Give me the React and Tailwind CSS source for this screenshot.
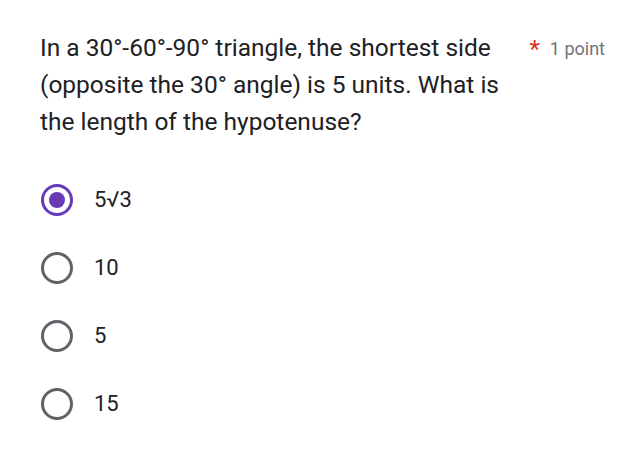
const options = [
  { label: '5√3', checked: true },
  { label: '10' },
  { label: '5' },
  { label: '15' },
];

function Radio({ checked }) {
  if (checked) {
    return (
      <div className="flex h-[32px] w-[32px] items-center justify-center rounded-full border-[3px] border-[#673ab7]">
        <div className="h-[16px] w-[16px] rounded-full bg-[#673ab7]" />
      </div>
    );
  }
  return <div className="h-[32px] w-[32px] rounded-full border-[3px] border-[#5f6368]" />;
}

export default function App() {
  return (
    <div className="h-[463px] w-[641px] bg-white font-['Roboto',sans-serif]">
      <div className="flex items-start pl-[40px] pr-[36px] pt-[29px]">
        <p className="w-[470px] text-[24.5px] leading-[37px] text-[#202124]">
          In a 30°-60°-90° triangle, the shortest side (opposite the 30° angle) is 5 units. What is the length of the hypotenuse?
        </p>
        <div className="ml-auto flex items-center gap-[10px] pt-[8px]">
          <span className="text-[24px] leading-none text-[#d93025]">*</span>
          <span className="text-[18px] leading-[20px] text-[#70757a]">1 point</span>
        </div>
      </div>
      <div className="mt-[44px] flex flex-col gap-[36px] pl-[41px]">
        {options.map((o) => (
          <div key={o.label} className="flex items-center gap-[21px]">
            <Radio checked={o.checked} />
            <span className="text-[22px] leading-[24px] text-[#202124]">{o.label}</span>
          </div>
        ))}
      </div>
    </div>
  );
}
